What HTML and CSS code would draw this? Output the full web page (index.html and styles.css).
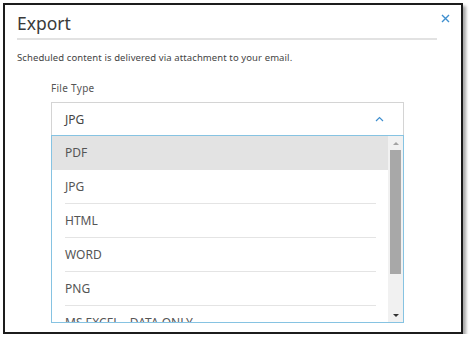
FILE: index.html
```html
<!DOCTYPE html>
<html lang="en">
<head>
    <meta charset="UTF-8">
    <meta name="viewport" content="width=device-width, initial-scale=1.0">
    <title>Export</title>
    <link rel="stylesheet" href="styles.css">
</head>
<body>
    <div class="dialog">
        <button type="button" class="close-button" aria-label="Close">
            <svg width="9" height="9" viewBox="0 0 9 9"><path d="M1 1L8 8M8 1L1 8" stroke="#3f8fcf" stroke-width="1.4" fill="none"/></svg>
        </button>
        <div class="dialog-header">
            <h1 class="dialog-title">Export</h1>
        </div>
        <p class="dialog-note">Scheduled content is delivered via attachment to your email.</p>
        <div class="field">
            <div class="field-label">File Type</div>
            <div class="select">
                <span class="select-value">JPG</span>
                <svg class="select-chevron" width="9" height="6" viewBox="0 0 9 6"><path d="M1 5L4.5 1.5L8 5" stroke="#3f8fcf" stroke-width="1.2" fill="none"/></svg>
            </div>
            <div class="dropdown">
                <ul class="option-list">
                    <li class="option option-active"><span>PDF</span></li>
                    <li class="option"><span>JPG</span></li>
                    <li class="option"><span>HTML</span></li>
                    <li class="option"><span>WORD</span></li>
                    <li class="option"><span>PNG</span></li>
                    <li class="option"><span>MS EXCEL - DATA ONLY</span></li>
                </ul>
                <div class="scrollbar">
                    <div class="scroll-button"><i class="arrow-up"></i></div>
                    <div class="scroll-track"><div class="scroll-thumb"></div></div>
                    <div class="scroll-button"><i class="arrow-down"></i></div>
                </div>
            </div>
        </div>
    </div>
</body>
</html>
```

FILE: styles.css
```css
* {
    box-sizing: border-box;
}
body {
    margin: 0;
    padding: 3px 0 0 3px;
    background-color: #fff;
    font-family: "Noto Sans", "Open Sans", Arial, sans-serif;
}
.dialog {
    position: relative;
    width: 460px;
    height: 331px;
    padding: 0 24px 0 12px;
    background-color: #fff;
    border: 2px solid #1c1c1c;
    box-shadow: 3px 3px 3px rgba(0, 0, 0, 0.35);
    overflow: hidden;
}
.close-button {
    position: absolute;
    top: 6px;
    right: 9px;
    width: 14px;
    height: 14px;
    padding: 0;
    border: none;
    background: none;
    display: flex;
    align-items: center;
    justify-content: center;
    cursor: pointer;
}
.dialog-header {
    padding: 4px 0 1px;
    border-bottom: 2px solid #e2e2e2;
}
.dialog-title {
    margin: 0;
    font-size: 17.5px;
    line-height: 28px;
    font-weight: normal;
    color: #3a3a3a;
}
.dialog-note {
    margin: 12px 0 0;
    font-size: 9.5px;
    line-height: 12px;
    letter-spacing: 0.1px;
    color: #444;
}
.field {
    margin: 17px 0 0 34px;
    width: 353px;
}
.field-label {
    font-size: 10px;
    line-height: 14px;
    letter-spacing: 0.3px;
    color: #555;
    margin-bottom: 7px;
}
.select {
    height: 33px;
    padding: 0 19px 0 13px;
    border: 1px solid #d4d4d4;
    border-bottom: none;
    display: flex;
    align-items: center;
    justify-content: space-between;
}
.select-value {
    font-size: 12px;
    color: #444;
}
.dropdown {
    height: 188px;
    border: 1px solid #86c3e2;
    display: flex;
}
.option-list {
    flex: 1;
    list-style-type: none;
    margin: 0;
    padding: 0;
    overflow: hidden;
}
.option {
    padding: 0 12px 0 13px;
    font-size: 12px;
    color: #555;
}
.option span {
    height: 34px;
    display: flex;
    align-items: center;
    border-bottom: 1px solid #e4e4e4;
}
.option-active {
    background-color: #e3e3e3;
}
.option-active span {
    border-bottom-color: transparent;
}
.scrollbar {
    width: 15px;
    background-color: #f1f1f1;
    display: flex;
    flex-direction: column;
}
.scroll-button {
    height: 14px;
    display: flex;
    align-items: center;
    justify-content: center;
}
.scroll-track {
    flex: 1;
    padding: 0 2px;
}
.scroll-thumb {
    height: 124px;
    background-color: #a8a8a8;
}
.arrow-up {
    width: 0;
    height: 0;
    border-left: 3px solid transparent;
    border-right: 3px solid transparent;
    border-bottom: 3px solid #a3a3a3;
}
.arrow-down {
    width: 0;
    height: 0;
    border-left: 3px solid transparent;
    border-right: 3px solid transparent;
    border-top: 3px solid #333;
}
```
